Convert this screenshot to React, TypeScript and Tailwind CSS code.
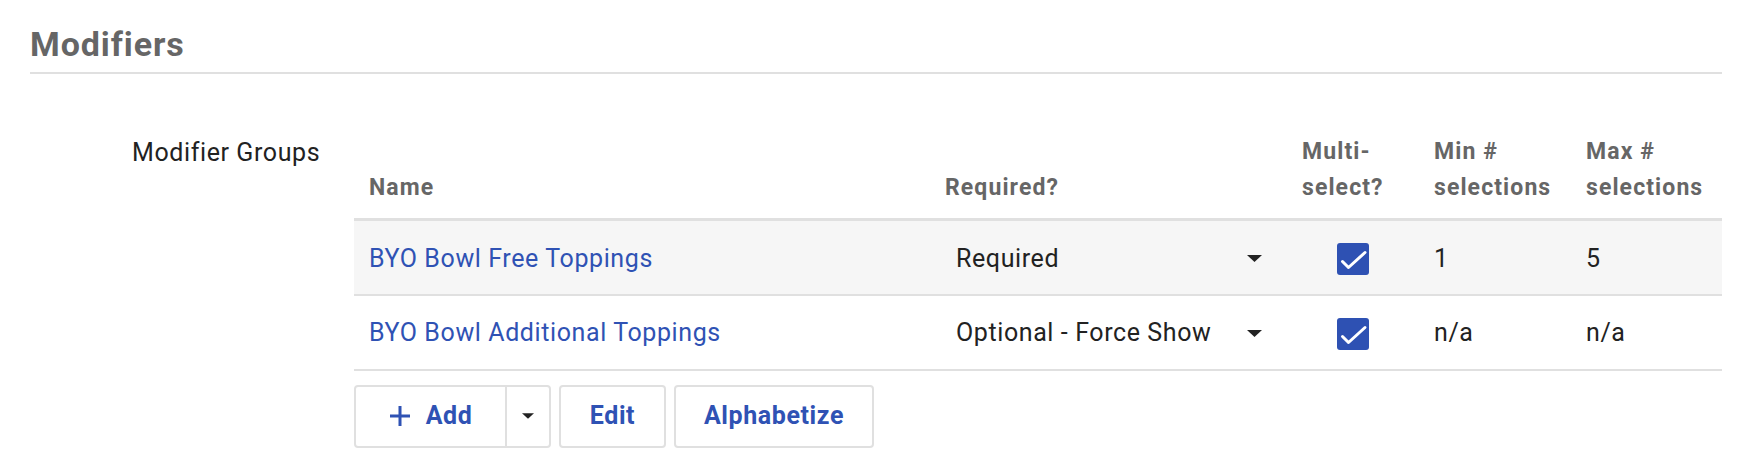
import React from "react"

type Group = {
  name: string
  required: string
  multi: boolean
  min: string
  max: string
}

const groups: Group[] = [
  { name: "BYO Bowl Free Toppings", required: "Required", multi: true, min: "1", max: "5" },
  { name: "BYO Bowl Additional Toppings", required: "Optional - Force Show", multi: true, min: "n/a", max: "n/a" },
]

function Caret({ className }: { className?: string }) {
  return (
    <svg className={className} viewBox="0 0 15 7" fill="currentColor">
      <path d="M0 0h15L7.5 7z" />
    </svg>
  )
}

function Checkbox() {
  return (
    <span className="inline-flex w-[32px] h-[32px] rounded-[3px] bg-[#2e51b3] items-center justify-center align-middle">
      <svg className="w-[32px] h-[32px]" viewBox="0 0 32 32" fill="none">
        <path d="M5.5 18.5l6 6L28 9.5" stroke="white" strokeWidth={3} strokeLinecap="round" strokeLinejoin="round" />
      </svg>
    </span>
  )
}

export default function App() {
  return (
    <div className="w-[1744px] h-[464px] bg-white pl-[30px] pr-[22px] font-['Roboto','Liberation_Sans',sans-serif] overflow-hidden">
      {/* Section header */}
      <h2 className="pt-[27px] pb-[11px] border-b-2 border-[#e0e0e0] text-[34px] leading-[34px] font-bold tracking-[0.9px] text-[#666666]">
        Modifiers
      </h2>

      <div className="flex mt-[60px]">
        <div className="w-[324px] pl-[102px] pt-[6px] text-[25px] leading-[25px] tracking-[0.6px] text-[#222222]">
          Modifier Groups
        </div>

        <div className="flex-1">
          <table className="table-fixed w-[1368px] border-collapse">
            <colgroup>
              <col className="w-[576px]" />
              <col className="w-[357px]" />
              <col className="w-[132px]" />
              <col className="w-[152px]" />
              <col className="w-[151px]" />
            </colgroup>
            <thead>
              <tr className="border-b-[3px] border-[#e0e0e0] text-left text-[23px] leading-[36px] font-bold tracking-[1.1px] text-[#666666]">
                <th className="align-bottom px-[15px] pb-[12px]">Name</th>
                <th className="align-bottom px-[15px] pb-[12px]">Required?</th>
                <th className="align-bottom px-[15px] pb-[12px]">
                  Multi-
                  <br />
                  select?
                </th>
                <th className="align-bottom px-[15px] pb-[12px]">
                  Min #
                  <br />
                  selections
                </th>
                <th className="align-bottom px-[15px] pb-[12px]">
                  Max #
                  <br />
                  selections
                </th>
              </tr>
            </thead>
            <tbody className="text-[25px] tracking-[0.6px] text-[#222222]">
              {groups.map((g, i) => (
                <tr key={g.name} className={`h-[75px] border-b-2 border-[#e0e0e0] ${i === 0 ? "bg-[#f6f6f6]" : ""}`}>
                  <td className="px-[15px] pt-[2px] text-[#2f52b4]">{g.name}</td>
                  <td className="px-[15px] pt-[2px]">
                    <div className="flex items-center justify-between pl-[11px] pr-[10px]">
                      <span>{g.required}</span>
                      <Caret className="w-[15px] h-[7px] text-[#222222]" />
                    </div>
                  </td>
                  <td className="text-center">{g.multi && <Checkbox />}</td>
                  <td className="px-[15px] pt-[2px]">{g.min}</td>
                  <td className="px-[15px] pt-[2px]">{g.max}</td>
                </tr>
              ))}
            </tbody>
          </table>

          <div className="flex gap-[8px] mt-[14px] text-[25px] font-bold tracking-[0.6px] text-[#2f52b4]">
            <div className="flex h-[63px] rounded-[4px] border-2 border-[#e0e0e0]">
              <button className="flex items-center gap-[15px] w-[151px] justify-center border-r-2 border-[#e0e0e0]">
                <svg className="w-[22px] h-[22px]" viewBox="0 0 22 22" fill="none">
                  <path d="M11 1v20M1 11h20" stroke="currentColor" strokeWidth={3} />
                </svg>
                Add
              </button>
              <button className="flex items-center justify-center w-[42px]">
                <Caret className="w-[12px] h-[6px] text-[#222222]" />
              </button>
            </div>
            <button className="h-[63px] w-[107px] rounded-[4px] border-2 border-[#e0e0e0]">Edit</button>
            <button className="h-[63px] w-[200px] rounded-[4px] border-2 border-[#e0e0e0]">Alphabetize</button>
          </div>
        </div>
      </div>
    </div>
  )
}
